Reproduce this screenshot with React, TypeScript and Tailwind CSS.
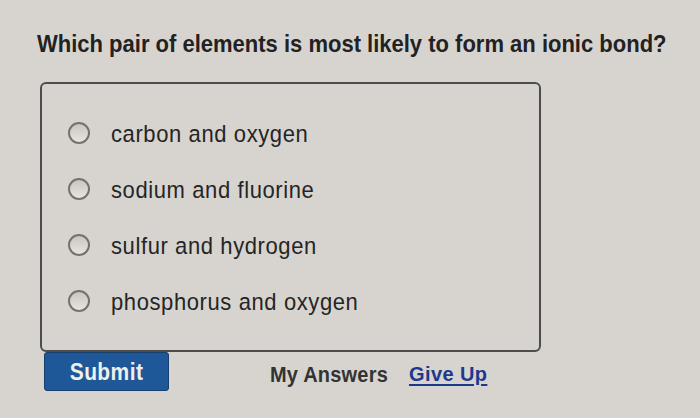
import React from "react";

const options = [
  "carbon and oxygen",
  "sodium and fluorine",
  "sulfur and hydrogen",
  "phosphorus and oxygen",
];

export default function App() {
  return (
    <div
      className="w-[700px] h-[418px] overflow-hidden bg-[#d7d4cf] text-[#262626]"
      style={{ fontFamily: '"Liberation Sans", Arial, sans-serif' }}
    >
      <div className="pl-[37px] pt-[30px]">
        {/* Question */}
        <h1 className="text-[22px] font-bold leading-[28px] tracking-[0px] text-[#222]">
          <span className="inline-block scale-y-[1.12]">
            Which pair of elements is most likely to form an ionic bond?
          </span>
        </h1>

        {/* Choices */}
        <div className="ml-[3px] mt-[24px] w-[501px] h-[270px] rounded-[6px] border-2 border-[#4d4d4d] pl-[26px] pt-[35px] flex flex-col gap-[28px]">
          {options.map((opt) => (
            <label key={opt} className="flex items-center h-[28px] gap-[21px]">
              <span className="w-[22px] h-[22px] rounded-full border-2 border-[#737270] bg-gradient-to-b from-[#c9c6c0] to-[#e8e5e0] shrink-0" />
              <span className="inline-block scale-y-[1.12] text-[22px] tracking-[0.6px] text-[#252525]">{opt}</span>
            </label>
          ))}
        </div>

        {/* Actions */}
        <div className="flex items-center ml-[7px]">
          <button className="w-[125px] h-[39px] rounded-[3px] border border-[#173f6d] bg-[#1f5898] text-[#eef0ee] text-[21px] font-bold tracking-[0.4px]">
            <span className="inline-block scale-y-[1.1]">Submit</span>
          </button>
          <span className="inline-block scale-y-[1.1] ml-[101px] mt-[4px] text-[20px] font-bold text-[#333] tracking-[0.2px]">My Answers</span>
          <a className="inline-block ml-[21px] mt-[4px] text-[20px] font-bold text-[#1c3a8c] underline underline-offset-[3px] decoration-2 tracking-[0.4px]">
            Give Up
          </a>
        </div>
      </div>
    </div>
  );
}
